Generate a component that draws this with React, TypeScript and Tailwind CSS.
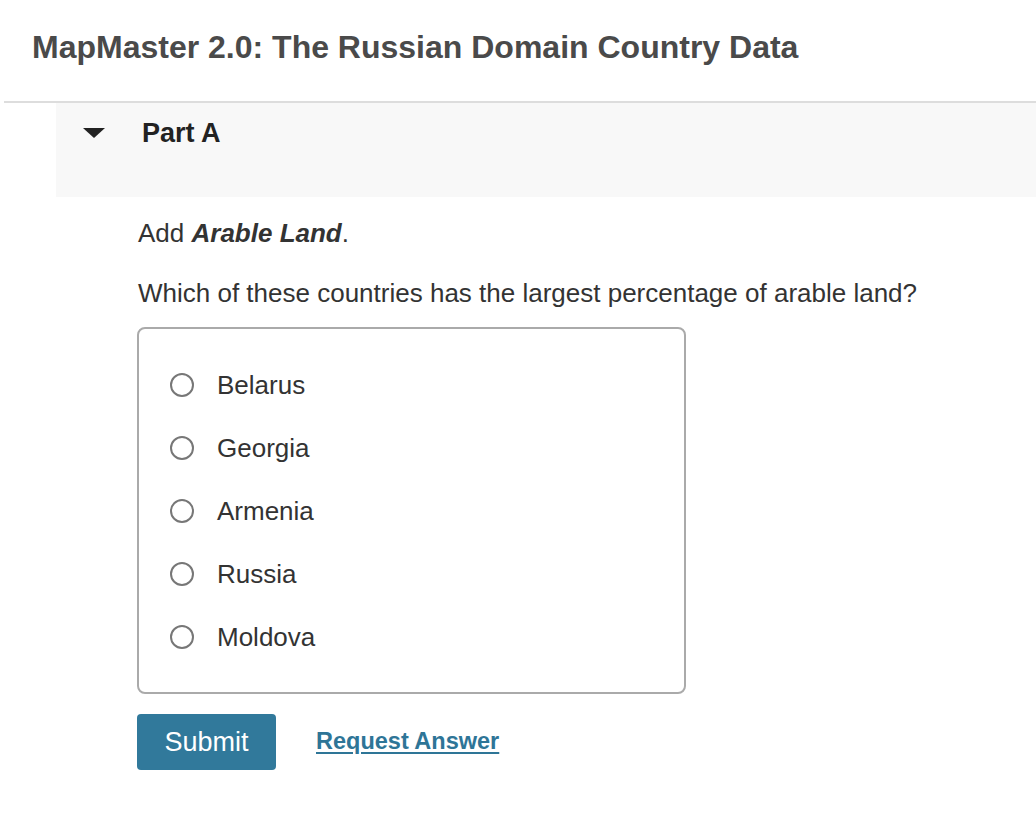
const choices = ['Belarus', 'Georgia', 'Armenia', 'Russia', 'Moldova'];

function Caret() {
  return (
    <svg width="22" height="10" viewBox="0 0 22 10" className="shrink-0">
      <polygon points="0,0 22,0 11,10" fill="#222222" />
    </svg>
  );
}

export default function App() {
  return (
    <div className="min-h-screen bg-white font-['Liberation_Sans',Arial,sans-serif]">
      <div className="ml-[4px] border-b-2 border-[#dddddd] pl-[28px] pt-[27px] pb-[34px]">
        <h1 className="text-[32px] leading-[40px] font-bold text-[#4a4a4a]">
          MapMaster 2.0: The Russian Domain Country Data
        </h1>
      </div>

      <div className="ml-[56px] h-[94px] bg-[#f8f8f8] pt-[14px]">
        <div className="flex items-center h-[32px]">
          <div className="ml-[27px] w-[59px]">
            <Caret />
          </div>
          <h2 className="text-[27px] leading-[32px] font-bold text-[#222222]">Part A</h2>
        </div>
      </div>

      <div className="ml-[138px] pt-[20px] text-[#333333]">
        <p className="text-[26px] leading-[32px]">
          Add <b><i>Arable Land</i></b>.
        </p>
        <p className="mt-[28px] text-[26px] leading-[32px]">
          Which of these countries has the largest percentage of arable land?
        </p>

        <div className="mt-[18px] -ml-[1px] w-[549px] rounded-[8px] border-2 border-[#aaaaaa] pt-[24px] pb-[24px]">
          {choices.map((c) => (
            <label key={c} className="flex items-center h-[63px] pl-[31px] cursor-pointer">
              <span className="h-[24px] w-[24px] shrink-0 rounded-full border-2 border-[#777777] bg-white" />
              <span className="ml-[23px] text-[26px] leading-[32px] text-[#333333]">{c}</span>
            </label>
          ))}
        </div>

        <div className="mt-[20px] flex items-center -ml-[1px]">
          <button className="h-[56px] w-[139px] rounded-[4px] bg-[#31799b] text-[27px] text-white">
            Submit
          </button>
          <a href="#" className="ml-[40px] text-[23.5px] font-bold text-[#2e7597] underline underline-offset-[3px]">
            Request Answer
          </a>
        </div>
      </div>
    </div>
  );
}
